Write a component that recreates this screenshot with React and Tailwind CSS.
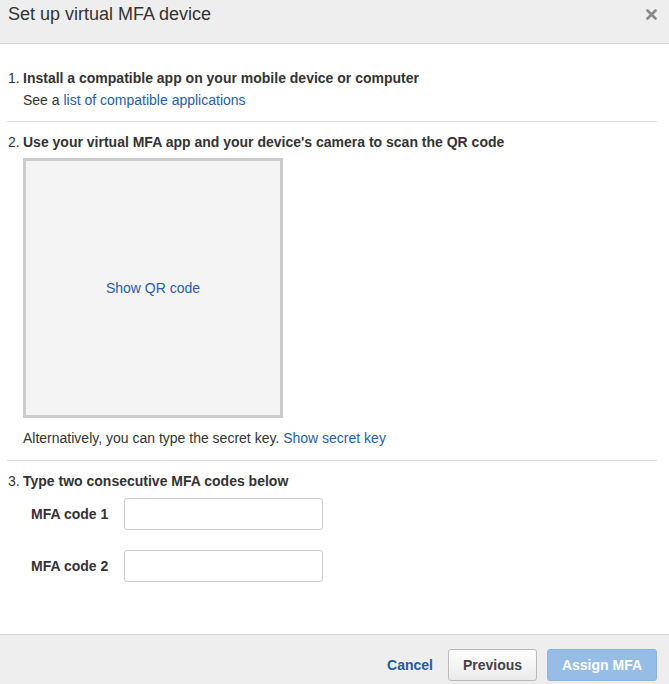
const LINK = "text-[#2660a8]";

const Step = ({ num, title, children }) => (
  <div className="flex">
    <span className="w-[15px] shrink-0 text-[#333]">{num}.</span>
    <div className="flex-1">
      <div className="font-bold text-[#333]">{title}</div>
      {children}
    </div>
  </div>
);

const CodeField = ({ label }) => (
  <div className="flex items-center pl-[23px]">
    <label className="w-[93px] font-bold text-[#333]">{label}</label>
    <input
      type="text"
      className="w-[199px] h-[32px] border border-[#cccccc] rounded-[3px] bg-white px-2 outline-none"
    />
  </div>
);

export default function App() {
  return (
    <div
      className="w-[669px] h-[684px] bg-white flex flex-col text-[14px] leading-[20px] text-[#333] overflow-hidden"
      style={{ fontFamily: '"Liberation Sans", Arial, sans-serif' }}
    >
      {/* header */}
      <div className="h-[44px] shrink-0 bg-[#eeeeee] border-b border-[#d5d5d5] flex justify-between pl-[8px] pr-[12px] pt-[2px]">
        <h2 className="text-[18px] leading-[24px] text-[#333] font-normal">Set up virtual MFA device</h2>
        <svg width="11" height="11" viewBox="0 0 11 11" className="mt-[7px]">
          <path d="M1.5 1.5 L9.5 9.5 M9.5 1.5 L1.5 9.5" stroke="#8a8a8a" strokeWidth="2.6" strokeLinecap="round" />
        </svg>
      </div>

      {/* body */}
      <div className="flex-1 pt-[24px] pl-[8px] pr-[12px]">
        <Step num="1" title="Install a compatible app on your mobile device or computer">
          <div className="mt-[2px]">
            See a <a className={LINK}>list of compatible applications</a>
          </div>
        </Step>

        <div className="border-t border-[#dddddd] mt-[11px] mb-[10px] ml-[-1px]" />

        <Step num="2" title="Use your virtual MFA app and your device's camera to scan the QR code">
          <div className="mt-[6px] w-[260px] h-[260px] border-[3px] border-[#cccccc] bg-[#f4f4f4] flex items-center justify-center">
            <a className={LINK}>Show QR code</a>
          </div>
          <div className="mt-[10px]">
            Alternatively, you can type the secret key. <a className={LINK}>Show secret key</a>
          </div>
        </Step>

        <div className="border-t border-[#dddddd] mt-[12px] mb-[10px] ml-[-1px]" />

        <Step num="3" title="Type two consecutive MFA codes below" />

        <div className="mt-[7px] flex flex-col gap-[20px]">
          <CodeField label="MFA code 1" />
          <CodeField label="MFA code 2" />
        </div>
      </div>

      {/* footer */}
      <div className="h-[50px] shrink-0 bg-[#eeeeee] border-t border-[#d5d5d5] flex items-start justify-end gap-[10px] pr-[12px] pt-[14px]">
        <a className="font-bold text-[#1e5aa8] mt-[6px] mr-[5px]">Cancel</a>
        <button className="h-[32px] w-[89px] rounded-[3px] border border-[#bbbbbb] bg-gradient-to-b from-white to-[#eaeaea] font-bold text-[#444]">
          Previous
        </button>
        <button className="h-[32px] w-[110px] rounded-[3px] border border-[#8db4df] bg-[#95bde6] font-bold text-white">
          Assign MFA
        </button>
      </div>
    </div>
  );
}
